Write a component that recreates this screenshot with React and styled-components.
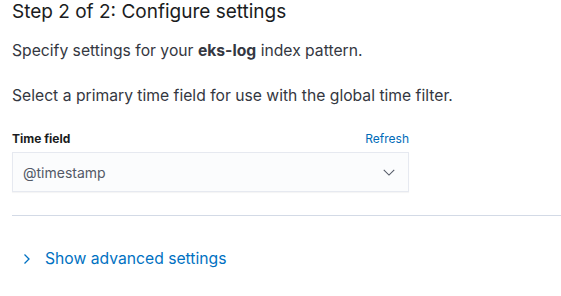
import React from "react";
import styled, { createGlobalStyle } from "styled-components";

const GlobalStyle = createGlobalStyle`
  body {
    margin: 0;
    background: #fff;
    font-family: Inter, "Noto Sans", sans-serif;
  }
`;

const Page = styled.div`
  display: flex;
  flex-direction: column;
  padding: 0 0 0 12px;
`;

const Title = styled.h2`
  margin: 0;
  font-size: 19px;
  line-height: 24px;
  font-weight: 400;
  color: #1a1c21;
`;

const Text = styled.p`
  margin: ${({ first }) => (first ? "15px 0 0" : "21px 0 0")};
  font-size: 15.7px;
  line-height: 24px;
  color: #343741;
`;

const FormRow = styled.div`
  width: 397px;
  margin-top: 23px;
  display: flex;
  flex-direction: column;
`;

const LabelRow = styled.div`
  display: flex;
  justify-content: space-between;
  align-items: baseline;
  margin-bottom: 5px;
`;

const Label = styled.label`
  font-size: 12px;
  font-weight: 700;
  color: #1a1c21;
  line-height: 16px;
`;

const LinkButton = styled.button`
  border: 0;
  background: none;
  padding: 0;
  font-family: inherit;
  font-size: 12px;
  color: #006bb8;
  cursor: pointer;
`;

const Select = styled.div`
  height: 40px;
  box-sizing: border-box;
  display: flex;
  align-items: center;
  justify-content: space-between;
  padding: 0 12px 0 10px;
  background: #fbfcfd;
  border: 1px solid #e6e9f0;
  box-shadow: 0 1px 1px rgba(0, 0, 0, 0.04);
  font-size: 14px;
  color: #535966;
`;

const Divider = styled.hr`
  margin: 23px 0 0;
  border: 0;
  border-top: 1px solid #d3dae6;
`;

const Toggle = styled.button`
  margin: 33px 0 0 10px;
  align-self: flex-start;
  display: flex;
  align-items: center;
  gap: 13px;
  border: 0;
  background: none;
  padding: 0;
  font-family: inherit;
  font-size: 15.7px;
  color: #0071c2;
  cursor: pointer;
`;

const ChevronDown = () => (
  <svg width="14" height="14" viewBox="0 0 16 16" fill="none">
    <path d="M2 5.5l6 6 6-6" stroke="#535966" strokeWidth="1.2" />
  </svg>
);

const ChevronRight = () => (
  <svg width="10" height="12" viewBox="0 0 10 12" fill="none">
    <path d="M2.5 1.5L7 6l-4.5 4.5" stroke="#0071c2" strokeWidth="1.3" />
  </svg>
);

export default function App() {
  return (
    <>
      <GlobalStyle />
      <Page>
        <Title>Step 2 of 2: Configure settings</Title>
        <Text first>
          Specify settings for your <b>eks-log</b> index pattern.
        </Text>
        <Text>Select a primary time field for use with the global time filter.</Text>
        <FormRow>
          <LabelRow>
            <Label>Time field</Label>
            <LinkButton>Refresh</LinkButton>
          </LabelRow>
          <Select>
            <span>@timestamp</span>
            <ChevronDown />
          </Select>
        </FormRow>
        <Divider />
        <Toggle>
          <ChevronRight />
          Show advanced settings
        </Toggle>
      </Page>
    </>
  );
}
